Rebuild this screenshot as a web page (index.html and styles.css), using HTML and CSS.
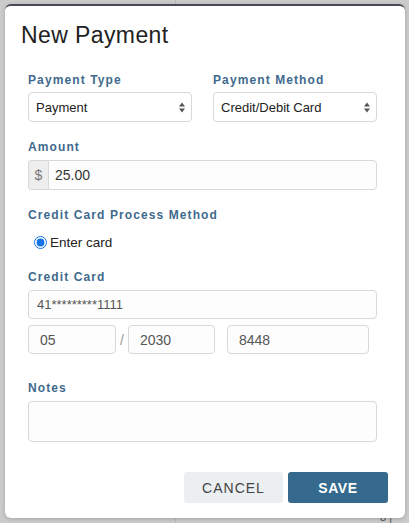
FILE: index.html
```html
<!DOCTYPE html>
<html lang="en">
<head>
<meta charset="utf-8">
<title>New Payment</title>
<link rel="stylesheet" href="styles.css">
</head>
<body>
<div class="backdrop-line"></div>
<span class="backdrop-text">8 |</span>
<div class="modal">
  <div class="modal-header">
    <h1 class="modal-title">New Payment</h1>
  </div>
  <div class="modal-body">
    <div class="grid-two">
      <div class="field">
        <label class="field-label">Payment Type</label>
        <div class="select">
          <span>Payment</span>
          <svg class="select-arrow" width="6" height="11" viewBox="0 0 6 11"><path d="M0 4.5 L3 0.5 L6 4.5 Z M0 6.5 L3 10.5 L6 6.5 Z" fill="#555"/></svg>
        </div>
      </div>
      <div class="field">
        <label class="field-label">Payment Method</label>
        <div class="select">
          <span>Credit/Debit Card</span>
          <svg class="select-arrow" width="6" height="11" viewBox="0 0 6 11"><path d="M0 4.5 L3 0.5 L6 4.5 Z M0 6.5 L3 10.5 L6 6.5 Z" fill="#555"/></svg>
        </div>
      </div>
    </div>

    <div class="field">
      <label class="field-label">Amount</label>
      <div class="input-group">
        <span class="input-prefix">$</span>
        <input class="input input-amount" type="text" value="25.00">
      </div>
    </div>

    <div class="field">
      <label class="field-label">Credit Card Process Method</label>
      <div class="radio-row">
        <input class="radio" type="radio" name="method" checked>
        <span class="radio-text">Enter card</span>
      </div>
    </div>

    <div class="field">
      <label class="field-label">Credit Card</label>
      <input class="input input-card" type="text" value="41*********1111">
      <div class="card-row">
        <input class="input input-small input-month" type="text" value="05">
        <span class="slash">/</span>
        <input class="input input-small input-year" type="text" value="2030">
        <input class="input input-small input-cvv" type="text" value="8448">
      </div>
    </div>

    <div class="field field-notes">
      <label class="field-label">Notes</label>
      <textarea class="textarea"></textarea>
    </div>
  </div>
  <div class="modal-footer">
    <button class="btn btn-cancel" type="button">CANCEL</button>
    <button class="btn btn-save" type="button">SAVE</button>
  </div>
</div>
</body>
</html>
```
FILE: styles.css
```css
html, body {
  margin: 0;
  padding: 0;
}
body {
  background: #cbcbcb;
  font-family: "Liberation Sans", Arial, sans-serif;
  width: 409px;
  height: 523px;
  overflow: hidden;
  position: relative;
  box-sizing: border-box;
  padding: 4px 4px 0 5px;
}
.backdrop-line {
  position: absolute;
  left: 175px;
  top: 0;
  width: 1px;
  height: 523px;
  background: #b9b9b9;
}
.backdrop-text {
  position: absolute;
  left: 380px;
  top: 512px;
  font-size: 11px;
  line-height: 11px;
  color: #555;
}
.modal {
  position: relative;
  width: 400px;
  height: 514px;
  box-sizing: border-box;
  background: #fff;
  border-top: 2px solid #4a4a56;
  border-radius: 6px;
  box-shadow: 0 1px 4px rgba(0, 0, 0, 0.2);
  display: flex;
  flex-direction: column;
}
.modal-header {
  padding: 15px 16px 24px 16px;
}
.modal-title {
  margin: 0;
  font-size: 23px;
  line-height: 28px;
  font-weight: normal;
  letter-spacing: 0.4px;
  color: #222;
}
.modal-body {
  padding: 0 28px 0 23px;
}
.grid-two {
  display: grid;
  grid-template-columns: 164px 164px;
  column-gap: 21px;
}
.field {
  margin-bottom: 18px;
}
.grid-two .field {
  margin-bottom: 18px;
}
.field-label {
  display: block;
  font-size: 12px;
  line-height: 15px;
  font-weight: bold;
  letter-spacing: 1.1px;
  color: #3f6a8d;
  margin-bottom: 5px;
}
.grid-two .field-label {
  margin-bottom: 4px;
}
.select {
  height: 30px;
  box-sizing: border-box;
  border: 1px solid #d8d8d8;
  border-radius: 4px;
  background: #fff;
  display: flex;
  align-items: center;
  justify-content: space-between;
  padding: 0 6px 0 7px;
  font-size: 13px;
  color: #222;
}
.select-arrow {
  display: block;
}
.input-group {
  display: flex;
  height: 30px;
}
.input-prefix {
  width: 20px;
  box-sizing: border-box;
  border: 1px solid #d8d8d8;
  border-right: none;
  border-radius: 4px 0 0 4px;
  background: #eeeeee;
  color: #777;
  font-size: 14px;
  display: flex;
  align-items: center;
  justify-content: center;
}
.input {
  box-sizing: border-box;
  border: 1px solid #d8d8d8;
  border-radius: 4px;
  background: #fdfdfd;
  font-family: "Liberation Sans", Arial, sans-serif;
  font-size: 13px;
  color: #555;
  margin: 0;
  outline: none;
}
.input-amount {
  flex: 1;
  height: 30px;
  border-radius: 0 4px 4px 0;
  padding: 0 6px;
  font-size: 14px;
  color: #333;
}
.input-card {
  display: block;
  width: 349px;
  height: 29px;
  padding: 0 8px;
}
.card-row {
  display: flex;
  align-items: center;
  margin-top: 6px;
}
.input-small {
  height: 29px;
  padding: 0 11px;
  font-size: 14px;
}
.input-month {
  width: 88px;
}
.slash {
  width: 12px;
  text-align: center;
  color: #999;
  font-size: 14px;
}
.input-year {
  width: 87px;
}
.input-cvv {
  width: 142px;
  margin-left: 12px;
}
.radio-row {
  display: flex;
  align-items: center;
  height: 20px;
  margin-top: 9px;
}
.radio {
  width: 13px;
  height: 13px;
  margin: 0 3px 0 6px;
  accent-color: #1473e6;
}
.radio-text {
  font-size: 13.5px;
  color: #222;
}
.field-notes {
  margin-top: 27px;
  margin-bottom: 0;
}
.textarea {
  display: block;
  width: 349px;
  height: 41px;
  box-sizing: border-box;
  border: 1px solid #d8d8d8;
  border-radius: 4px;
  background: #fdfdfd;
  resize: none;
  margin: 0;
  outline: none;
}
.modal-footer {
  display: flex;
  justify-content: flex-end;
  gap: 5px;
  padding: 30px 17px 0 0;
}
.btn {
  height: 31px;
  border: none;
  border-radius: 3px;
  font-family: "Liberation Sans", Arial, sans-serif;
  font-size: 14px;
  cursor: pointer;
  padding: 0;
}
.btn-cancel {
  width: 99px;
  background: #eceff1;
  color: #444;
  letter-spacing: 1px;
}
.btn-save {
  width: 100px;
  background: #35698d;
  color: #fff;
  font-weight: bold;
  letter-spacing: 0.6px;
}
```
